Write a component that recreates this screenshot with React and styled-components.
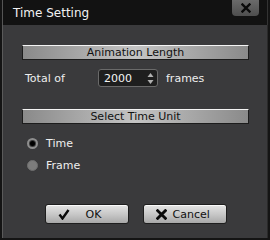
import React, { useState } from 'react';
import styled, { createGlobalStyle } from 'styled-components';

const GlobalStyle = createGlobalStyle`
  html, body {
    margin: 0;
    padding: 0;
    background: #111;
  }
  * {
    box-sizing: border-box;
  }
`;

const Frame = styled.div`
  position: relative;
  width: 270px;
  height: 240px;
  background: #111;
  border: 2px solid #141414;
  border-top: none;
  display: flex;
  flex-direction: column;
  font-family: "DejaVu Sans", Verdana, sans-serif;
  font-size: 11px;
`;

const TitleBar = styled.div`
  height: 25px;
  background: #121212;
  border-left: 1px solid #555;
  border-right: 1px solid #333;
  display: flex;
  align-items: center;
  padding-left: 10px;
  color: #f2f2f2;
  font-size: 12px;
`;

const CloseButton = styled.button`
  position: absolute;
  top: 0;
  right: 9px;
  width: 27px;
  height: 16px;
  padding: 0;
  border: none;
  border-radius: 0 0 4px 4px;
  background: linear-gradient(#6a6a6a, #4e4e4e);
  display: flex;
  align-items: center;
  justify-content: center;
`;

const Body = styled.div`
  flex: 1;
  background: #3a3a3c;
  border-left: 1px solid #5a5a5a;
  border-right: 1px solid #2a2a2a;
  padding: 20px 18px 0 19px;
  display: flex;
  flex-direction: column;
`;

const SectionBar = styled.div`
  height: 15px;
  margin-top: ${(p) => p.$top}px;
  border: 1px solid #1c1c1c;
  border-top: 1px solid #f4f4f4;
  background: linear-gradient(90deg, #8a8a8a 0%, #c4c4c4 50%, #8a8a8a 100%);
  color: #111;
  font-size: 11px;
  line-height: 13px;
  text-align: center;
`;

const Row = styled.div`
  display: flex;
  align-items: center;
  margin-top: 9px;
  color: #eee;
`;

const Label = styled.span`
  width: 76px;
  padding-left: 3px;
`;

const SpinBox = styled.div`
  width: 60px;
  height: 18px;
  background: #1e1e1e;
  border: 1px solid #6a6a6a;
  border-radius: 3px;
  display: flex;
  align-items: center;
  justify-content: space-between;
  padding: 0 3px 0 5px;
  color: #f4f4f4;
  margin-right: 8px;
`;

const RadioList = styled.div`
  display: flex;
  flex-direction: column;
  gap: 6px;
  margin-top: 11px;
  padding-left: 5px;
`;

const RadioRow = styled.label`
  display: flex;
  align-items: center;
  height: 16px;
  color: #eee;
  gap: 8px;
`;

const RadioDot = styled.span`
  width: 11px;
  height: 11px;
  border-radius: 50%;
  background: ${(p) => (p.$checked ? '#3a3a3a' : '#7c7c7c')};
  border: ${(p) => (p.$checked ? '2px solid #8e8e8e' : '1px solid #6e6e6e')};
  display: flex;
  align-items: center;
  justify-content: center;
  &::after {
    content: '';
    display: ${(p) => (p.$checked ? 'block' : 'none')};
    width: 5px;
    height: 5px;
    border-radius: 50%;
    background: #000;
  }
`;

const ButtonRow = styled.div`
  display: flex;
  justify-content: center;
  gap: 14px;
  margin-top: 31px;
`;

const Button = styled.button`
  width: 84px;
  height: 20px;
  border: 1px solid #1e1e1e;
  border-radius: 3px;
  background: linear-gradient(#e4e4e4 0%, #c8c8c8 50%, #a8a8a8 100%);
  box-shadow: inset 0 1px 0 #fafafa;
  display: flex;
  align-items: center;
  padding: 0 0 0 ${(p) => p.$pad}px;
  gap: ${(p) => p.$gap}px;
  font-family: "DejaVu Sans", Verdana, sans-serif;
  font-size: 11px;
  color: #111;
`;

const CrossIcon = ({ size = 10, w = 2.6 }) => (
  <svg width={size} height={size} viewBox="0 0 10 10">
    <path d="M1.5 1.5 L8.5 8.5 M8.5 1.5 L1.5 8.5" stroke="#0a0a0a" strokeWidth={w} strokeLinecap="square" />
  </svg>
);

const CheckIcon = () => (
  <svg width="12" height="11" viewBox="0 0 12 11">
    <path d="M1.5 5.5 L4.5 9.5 L10.5 1" stroke="#0a0a0a" strokeWidth="2.4" fill="none" strokeLinejoin="miter" />
  </svg>
);

const SpinArrows = () => (
  <svg width="7" height="13" viewBox="0 0 7 13">
    <path d="M3.5 1 L6.5 5 L0.5 5 Z" fill="#b0b0b0" />
    <path d="M3.5 12 L6.5 8 L0.5 8 Z" fill="#b0b0b0" />
  </svg>
);

const App = () => {
  const [unit, setUnit] = useState('time');

  return (
    <>
      <GlobalStyle />
      <Frame>
        <TitleBar>Time Setting</TitleBar>
        <CloseButton type="button">
          <CrossIcon size={10} w={2.4} />
        </CloseButton>
        <Body>
          <SectionBar $top={0}>Animation Length</SectionBar>
          <Row>
            <Label>Total of</Label>
            <SpinBox>
              2000
              <SpinArrows />
            </SpinBox>
            <span>frames</span>
          </Row>
          <SectionBar $top={22}>Select Time Unit</SectionBar>
          <RadioList>
            <RadioRow onClick={() => setUnit('time')}>
              <RadioDot $checked={unit === 'time'} />
              Time
            </RadioRow>
            <RadioRow onClick={() => setUnit('frame')}>
              <RadioDot $checked={unit === 'frame'} />
              Frame
            </RadioRow>
          </RadioList>
          <ButtonRow>
            <Button type="button" $pad={12} $gap={16}>
              <CheckIcon />
              OK
            </Button>
            <Button type="button" $pad={12} $gap={6}>
              <CrossIcon size={11} w={2.6} />
              Cancel
            </Button>
          </ButtonRow>
        </Body>
      </Frame>
    </>
  );
};

export default App;
